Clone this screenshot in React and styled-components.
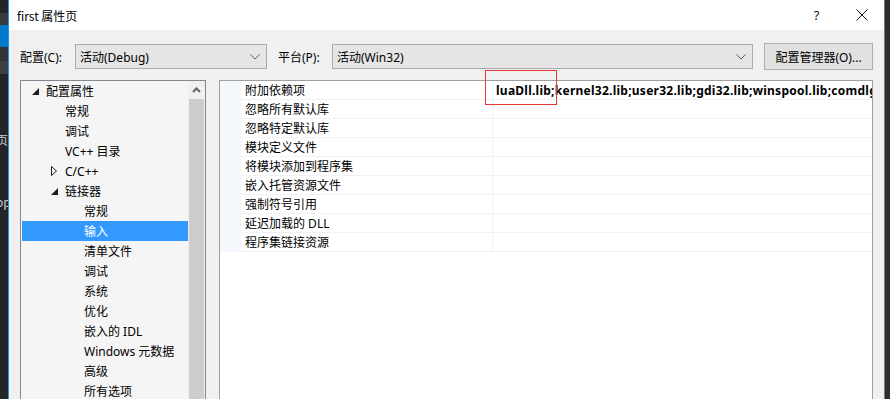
import React from 'react';
import styled, { createGlobalStyle } from 'styled-components';

const GlobalStyle = createGlobalStyle`
  html, body {
    margin: 0;
    padding: 0;
    width: 890px;
    height: 399px;
    overflow: hidden;
    background: #1e1e1e;
  }
  body {
    font-family: "Segoe UI", "Noto Sans", "Noto Sans CJK SC", sans-serif;
    font-size: 12px;
    color: #000;
  }
`;

const Screen = styled.div`
  display: flex;
  width: 890px;
  height: 399px;
  overflow: hidden;
`;

const LeftStrip = styled.div`
  width: 8px;
  flex: none;
  background: #252526;
  border-right: 1px solid #1c97ea;
  display: flex;
  flex-direction: column;
  overflow: hidden;
  color: #d0d0d0;
  font-family: "Noto Sans CJK SC", sans-serif;
  font-size: 12px;
`;

const StripBlock = styled.div`
  height: ${p => p.h}px;
  background: ${p => p.bg || 'transparent'};
  line-height: ${p => p.h}px;
  white-space: nowrap;
  text-indent: -4px;
`;

const RightStrip = styled.div`
  width: 5px;
  flex: none;
  background: #2d2d30;
  border-left: 1px solid #7a7a7a;
`;

const Dialog = styled.div`
  flex: 1;
  display: flex;
  flex-direction: column;
  background: #f0f0f0;
  position: relative;
  min-width: 0;
`;

const TitleBar = styled.div`
  height: 30px;
  flex: none;
  background: #fff;
  display: flex;
  align-items: center;
  padding-left: 8px;
`;

const Title = styled.div`
  flex: 1;
  font-size: 12px;
  font-family: "Segoe UI", "Noto Sans CJK SC", sans-serif;
`;

const TitleButton = styled.div`
  width: 45px;
  height: 30px;
  display: flex;
  align-items: center;
  justify-content: center;
  font-size: 13px;
  color: #111;
`;

const Content = styled.div`
  flex: 1;
  display: flex;
  flex-direction: column;
  padding: 13px 11px 0 11px;
  min-height: 0;
`;

const ConfigRow = styled.div`
  display: flex;
  align-items: center;
  height: 27px;
`;

const Label = styled.div`
  width: ${p => p.w}px;
  flex: none;
  white-space: nowrap;
`;

const Combo = styled.div`
  width: ${p => p.w}px;
  height: 25px;
  box-sizing: border-box;
  flex: none;
  background: #e5e5e5;
  border: 1px solid #acacac;
  display: flex;
  align-items: center;
  padding-left: 4px;
  margin-right: ${p => p.mr || 0}px;
`;

const ComboText = styled.div`
  flex: 1;
  white-space: nowrap;
`;

const Chevron = styled.svg`
  width: 10px;
  height: 6px;
  margin-right: 6px;
`;

const Button = styled.div`
  width: 111px;
  height: 27px;
  box-sizing: border-box;
  background: #e1e1e1;
  border: 1px solid #adadad;
  display: flex;
  align-items: center;
  justify-content: center;
  white-space: nowrap;
`;

const Panels = styled.div`
  flex: 1;
  display: flex;
  margin-top: 10px;
  min-height: 0;
`;

const TreePanel = styled.div`
  width: 186px;
  flex: none;
  box-sizing: border-box;
  border: 1px solid #828790;
  border-bottom: none;
  background: #f5f5f5;
  display: flex;
  padding-left: 1px;
`;

const TreeList = styled.div`
  flex: 1;
  display: flex;
  flex-direction: column;
`;

const TreeRow = styled.div`
  height: 20px;
  flex: none;
  display: flex;
  align-items: center;
  padding-left: ${p => p.level * 19 + 4}px;
  background: ${p => (p.selected ? '#3399ff' : 'transparent')};
  color: ${p => (p.selected ? '#fff' : '#000')};
  white-space: nowrap;
`;

const Arrow = styled.span`
  width: 20px;
  flex: none;
  display: flex;
  align-items: center;
  padding-left: 6px;
  box-sizing: border-box;
`;

const Scrollbar = styled.div`
  width: 17px;
  flex: none;
  background: #f0f0f0;
  display: flex;
  flex-direction: column;
`;

const ScrollArrow = styled.div`
  height: 18px;
  display: flex;
  align-items: center;
  justify-content: center;
`;

const ScrollThumb = styled.div`
  flex: 1;
  margin: 0 1px;
  background: #cdcdcd;
`;

const GridPanel = styled.div`
  flex: 1;
  margin-left: 13px;
  box-sizing: border-box;
  border: 1px solid #a0a0a0;
  border-bottom: none;
  background: #fff;
  overflow: hidden;
`;

const GridRow = styled.div`
  display: grid;
  grid-template-columns: 21px 252px 1fr;
  height: 19px;
`;

const Margin = styled.div`
  background: #f4f7fc;
`;

const Cell = styled.div`
  border-bottom: 1px solid #f0f2f7;
  border-right: ${p => (p.name ? '1px solid #f0f2f7' : 'none')};
  display: flex;
  align-items: center;
  padding-left: ${p => (p.name ? 4 : 3)}px;
  white-space: nowrap;
  overflow: hidden;
  font-weight: ${p => (p.bold ? 700 : 400)};
  letter-spacing: ${p => (p.bold ? '0.25px' : 'normal')};
  font-size: 12px;
  box-sizing: border-box;
`;

const Highlight = styled.div`
  position: absolute;
  left: 476px;
  top: 70px;
  width: 70px;
  height: 33px;
  border: 1px solid #e53935;
  pointer-events: none;
`;

const tree = [
  { level: 0, text: '配置属性', arrow: 'open' },
  { level: 1, text: '常规' },
  { level: 1, text: '调试' },
  { level: 1, text: 'VC++ 目录' },
  { level: 1, text: 'C/C++', arrow: 'closed' },
  { level: 1, text: '链接器', arrow: 'open' },
  { level: 2, text: '常规' },
  { level: 2, text: '输入', selected: true },
  { level: 2, text: '清单文件' },
  { level: 2, text: '调试' },
  { level: 2, text: '系统' },
  { level: 2, text: '优化' },
  { level: 2, text: '嵌入的 IDL' },
  { level: 2, text: 'Windows 元数据' },
  { level: 2, text: '高级' },
  { level: 2, text: '所有选项' },
];

const props = [
  { name: '附加依赖项', value: 'luaDll.lib;kernel32.lib;user32.lib;gdi32.lib;winspool.lib;comdlg32.lib;advapi32.lib;shell32.lib' },
  { name: '忽略所有默认库' },
  { name: '忽略特定默认库' },
  { name: '模块定义文件' },
  { name: '将模块添加到程序集' },
  { name: '嵌入托管资源文件' },
  { name: '强制符号引用' },
  { name: '延迟加载的 DLL' },
  { name: '程序集链接资源' },
];

const TreeArrow = ({ type }) => {
  if (type === 'open') {
    return (
      <svg width="7" height="7" viewBox="0 0 7 7">
        <path d="M7 0 L7 7 L0 7 Z" fill="#1e1e1e" />
      </svg>
    );
  }
  return (
    <svg width="6" height="10" viewBox="0 0 6 10">
      <path d="M0.5 0.5 L5.5 5 L0.5 9.5 Z" fill="none" stroke="#1e1e1e" />
    </svg>
  );
};

const ComboChevron = () => (
  <Chevron viewBox="0 0 10 6">
    <path d="M0.5 0.5 L5 5 L9.5 0.5" fill="none" stroke="#606060" />
  </Chevron>
);

const App = () => (
  <Screen>
    <GlobalStyle />
    <LeftStrip>
      <StripBlock h={13} />
      <StripBlock h={12} bg="#3a3a3a" />
      <StripBlock h={22} bg="#007acc" />
      <StripBlock h={14} bg="#333337" />
      <StripBlock h={13} bg="#3f3f46" />
      <StripBlock h={54} />
      <StripBlock h={24}>页</StripBlock>
      <StripBlock h={38} />
      <StripBlock h={24}>op</StripBlock>
    </LeftStrip>
    <Dialog>
      <TitleBar>
        <Title>first 属性页</Title>
        <TitleButton>?</TitleButton>
        <TitleButton>
          <svg width="12" height="12" viewBox="0 0 12 12">
            <path d="M0.5 0.5 L11.5 11.5 M11.5 0.5 L0.5 11.5" stroke="#111" strokeWidth="1" />
          </svg>
        </TitleButton>
      </TitleBar>
      <Content>
        <ConfigRow>
          <Label w={55}>配置(C):</Label>
          <Combo w={192} mr={11}>
            <ComboText>活动(Debug)</ComboText>
            <ComboChevron />
          </Combo>
          <Label w={54}>平台(P):</Label>
          <Combo w={421} mr={11}>
            <ComboText>活动(Win32)</ComboText>
            <ComboChevron />
          </Combo>
          <Button>配置管理器(O)...</Button>
        </ConfigRow>
        <Panels>
          <TreePanel>
            <TreeList>
              {tree.map((item, i) => (
                <TreeRow key={i} level={item.level} selected={item.selected}>
                  <Arrow>{item.arrow && <TreeArrow type={item.arrow} />}</Arrow>
                  {item.text}
                </TreeRow>
              ))}
            </TreeList>
            <Scrollbar>
              <ScrollArrow>
                <svg width="9" height="6" viewBox="0 0 9 6">
                  <path d="M1 5 L4.5 1.5 L8 5" fill="none" stroke="#606060" strokeWidth="2" />
                </svg>
              </ScrollArrow>
              <ScrollThumb />
            </Scrollbar>
          </TreePanel>
          <GridPanel>
            {props.map((p, i) => (
              <GridRow key={i}>
                <Margin />
                <Cell name>{p.name}</Cell>
                <Cell bold>{p.value || ''}</Cell>
              </GridRow>
            ))}
          </GridPanel>
        </Panels>
      </Content>
      <Highlight />
    </Dialog>
    <RightStrip />
  </Screen>
);

export default App;
